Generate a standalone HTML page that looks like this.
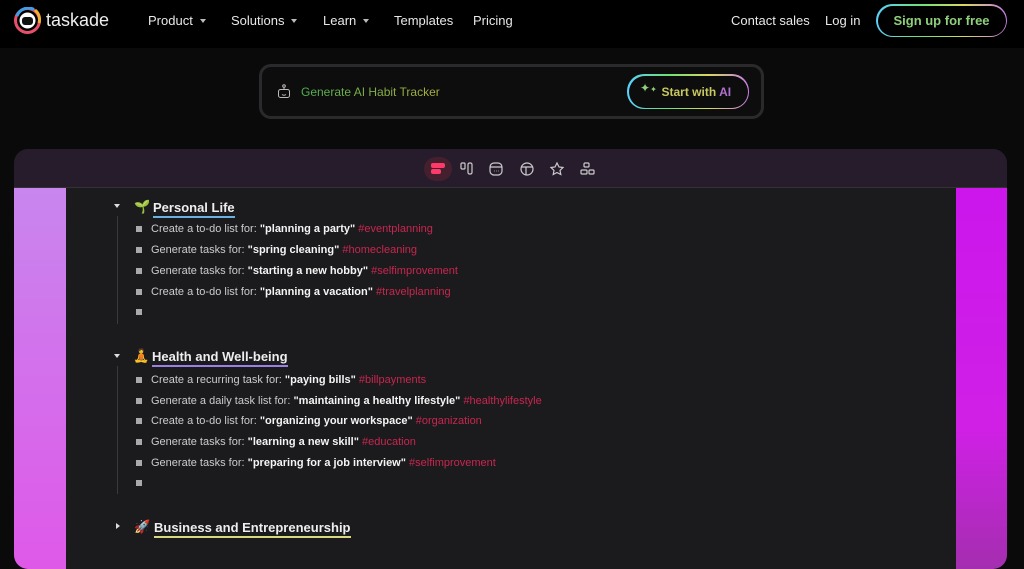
<!DOCTYPE html>
<html><head><meta charset="utf-8"><style>
*{margin:0;padding:0;box-sizing:border-box}
body{width:1024px;height:548px;background:#0a0a0a;font-family:"Liberation Sans","DejaVu Sans",sans-serif;overflow:hidden;position:relative;color:#ddd}
.nav{position:absolute;left:0;top:0;width:1024px;height:48px;background:#000}
.nav span{position:absolute;top:13px;font-size:13px;color:#e8e8e8}
.car{display:inline-block;width:0;height:0;border-left:3.5px solid transparent;border-right:3.5px solid transparent;border-top:4px solid #bbb;margin-left:7px;vertical-align:2px}
.signup{position:absolute;left:876px;top:4px;width:131px;height:33px;border-radius:17px;padding:1.5px;background:linear-gradient(90deg,#5ad0ff,#6de07a,#d8d860,#c87ce8)}
.signup div{width:100%;height:100%;border-radius:16px;background:#000;text-align:center;line-height:30px;font-size:13px;font-weight:bold;color:#8fd07a}
.gen{position:absolute;left:259px;top:64px;width:505px;height:55px;border:3px solid #2a2a2c;border-radius:12px;background:#0d0d0e}
.sa{position:absolute;left:627px;top:74px;width:122px;height:35px;border-radius:17px;padding:1.5px;background:linear-gradient(90deg,#5ad0ff,#6de07a,#d8d860,#c87ce8)}
.sa div{width:100%;height:100%;border-radius:16px;background:#0d0d0e;line-height:32px;font-size:12px;font-weight:bold;color:#c8c860;padding-left:33px}
.panel{position:absolute;left:14px;top:149px;width:993px;height:420px;border-radius:14px;overflow:hidden;background:#1b1b1e}
.ph{position:absolute;left:0;top:0;width:993px;height:39px;background:#261c2c;border-bottom:1px solid #333}
.ls{position:absolute;left:0;top:39px;width:52px;height:400px;background:linear-gradient(180deg,#c886ee,#e056e8)}
.rs{position:absolute;left:942px;top:39px;width:51px;height:400px;background:linear-gradient(180deg,#cc16ec 0%,#d020e6 60%,#9e30a8 100%)}
.h{position:absolute;font-size:13px;font-weight:bold;color:#eee}
.h u{text-decoration:none;padding-bottom:1px;border-bottom:2px solid}
.it{position:absolute;left:151px;font-size:11px;color:#ccc;white-space:nowrap}
.it b{color:#f4f4f4}
.it i{font-style:normal;color:#c8264e}
.sq{position:absolute;left:136px;width:6px;height:6px;background:#aaa}
.tri{position:absolute;left:114px;width:0;height:0;border-left:3px solid transparent;border-right:3px solid transparent;border-top:4px solid #ddd}
.vl{position:absolute;left:117px;width:1px;background:#3a3a3e}
</style></head><body>
<div class="nav">
<svg style="position:absolute;left:14px;top:7px" width="27" height="27" viewBox="0 0 27 27"><circle cx="13.5" cy="13.5" r="12" fill="none" stroke="#e8506a" stroke-width="3"/><path d="M3 9 A12 12 0 0 1 20 2.5" stroke="#3aa0e8" stroke-width="3" fill="none"/><path d="M21 3 A12 12 0 0 1 25 16" stroke="#f0b030" stroke-width="3" fill="none"/><circle cx="13.5" cy="13.5" r="8" fill="#fff"/><rect x="8" y="10" width="11" height="8" rx="3" fill="#111"/></svg>
<span style="left:46px;top:10px;font-size:18px;color:#eee">taskade</span>
<span style="left:148px">Product<i class="car"></i></span>
<span style="left:231px">Solutions<i class="car"></i></span>
<span style="left:323px">Learn<i class="car"></i></span>
<span style="left:394px">Templates</span>
<span style="left:473px">Pricing</span>
<span style="left:731px">Contact sales</span>
<span style="left:825px">Log in</span>
<div class="signup"><div>Sign up for free</div></div>
</div>
<div class="gen">
<svg style="position:absolute;left:15px;top:17px" width="14" height="15" viewBox="0 0 14 15"><circle cx="7" cy="2" r="1.3" fill="none" stroke="#bbb"/><path d="M7 3.3V5" stroke="#bbb"/><rect x="1.5" y="5.5" width="11" height="8" rx="2" fill="none" stroke="#bbb"/><path d="M5 10.5q2 1.5 4 0" stroke="#bbb" fill="none"/></svg>
<span style="position:absolute;left:39px;top:18px;font-size:12px;background:linear-gradient(90deg,#50b050,#b0b040);-webkit-background-clip:text;color:transparent">Generate AI Habit Tracker</span>
</div>
<div class="sa"><div>Start with <span style="color:#b070d0">AI</span></div>
<span style="position:absolute;left:13px;top:7px;color:#8fd07a;font-size:12px">✦<span style="font-size:8px">✦</span></span></div>
<div class="panel">
<div class="ph">
<div style="position:absolute;left:410px;top:8px;width:28px;height:24px;border-radius:12px;background:#44202e"></div>
<div style="position:absolute;left:417px;top:14px;width:14px;height:5px;border-radius:2px;background:#ff3a6a"></div>
<div style="position:absolute;left:417px;top:20px;width:10px;height:5px;border-radius:2px;background:#ff3a6a"></div>
<svg style="position:absolute;left:445px;top:12px" width="160" height="16" viewBox="0 0 160 16" fill="none" stroke="#ccc" stroke-width="1.2"><rect x="2" y="2" width="4" height="6" rx="1"/><rect x="9" y="2" width="4" height="11" rx="1.5"/><rect x="31" y="2" width="12" height="12" rx="4"/><path d="M31 6h12M35 10h.5M37 10h.5M39 10h.5"/><circle cx="68" cy="8" r="6"/><path d="M62 6h12M67 6v8"/><path d="M98 2l2 4 4 .5-3 3 .8 4-3.8-2-3.8 2 .8-4-3-3 4-.5z"/><rect x="125" y="2" width="5" height="4" rx="1"/><rect x="122" y="9" width="6" height="4" rx="1"/><rect x="130" y="9" width="5" height="4" rx="1"/></svg>
</div>
<div class="ls"></div><div class="rs"></div>
</div>
<div class="tri" style="top:204px"></div>
<span style="position:absolute;left:134px;top:199px;font-size:13px;color:#8c3">🌱</span>
<div class="h" style="left:153px;top:200px"><u style="border-color:#6ab0e0">Personal Life</u></div>
<div class="vl" style="top:216px;height:108px"></div>
<div class="sq" style="top:226px"></div><div class="it" style="top:223px">Create a to-do list for: <b>"planning a party"</b> <i>#eventplanning</i></div>
<div class="sq" style="top:247px"></div><div class="it" style="top:244px">Generate tasks for: <b>"spring cleaning"</b> <i>#homecleaning</i></div>
<div class="sq" style="top:268px"></div><div class="it" style="top:265px">Generate tasks for: <b>"starting a new hobby"</b> <i>#selfimprovement</i></div>
<div class="sq" style="top:289px"></div><div class="it" style="top:286px">Create a to-do list for: <b>"planning a vacation"</b> <i>#travelplanning</i></div>
<div class="sq" style="top:309px"></div>
<div class="tri" style="top:354px"></div>
<span style="position:absolute;left:133px;top:348px;font-size:13px">🧘</span>
<div class="h" style="left:152px;top:349px"><u style="border-color:#9a80e0">Health and Well-being</u></div>
<div class="vl" style="top:366px;height:128px"></div>
<div class="sq" style="top:377px"></div><div class="it" style="top:374px">Create a recurring task for: <b>"paying bills"</b> <i>#billpayments</i></div>
<div class="sq" style="top:398px"></div><div class="it" style="top:395px">Generate a daily task list for: <b>"maintaining a healthy lifestyle"</b> <i>#healthylifestyle</i></div>
<div class="sq" style="top:418px"></div><div class="it" style="top:415px">Create a to-do list for: <b>"organizing your workspace"</b> <i>#organization</i></div>
<div class="sq" style="top:439px"></div><div class="it" style="top:436px">Generate tasks for: <b>"learning a new skill"</b> <i>#education</i></div>
<div class="sq" style="top:460px"></div><div class="it" style="top:457px">Generate tasks for: <b>"preparing for a job interview"</b> <i>#selfimprovement</i></div>
<div class="sq" style="top:480px"></div>
<div style="position:absolute;left:116px;top:523px;border-top:3px solid transparent;border-bottom:3px solid transparent;border-left:4px solid #ddd"></div>
<span style="position:absolute;left:134px;top:519px;font-size:13px">🚀</span>
<div class="h" style="left:154px;top:520px"><u style="border-color:#d8d880">Business and Entrepreneurship</u></div>
</body></html>
